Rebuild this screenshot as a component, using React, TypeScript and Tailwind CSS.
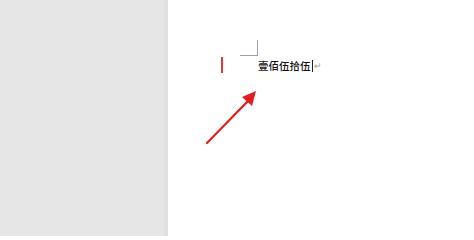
export default function App() {
  return (
    <div className="relative flex h-[236px] w-[474px] overflow-hidden bg-white font-['Noto_Sans_CJK_SC',sans-serif]">
      {/* left page margin */}
      <div className="h-full w-[164px] bg-[#e6e6e6]" />
      <div className="h-full w-[4px] bg-[#e0e0e0]" />

      {/* document area */}
      <div className="flex flex-1 items-start pl-[53px] pt-[40px]">
        <div className="mt-[17px] h-[16px] w-[2px] bg-[#e53935]" />
        <div className="ml-[17px] h-[16px] w-[18px] border-b border-r border-[#a0a0a0]" />
        <div className="mt-[19px] flex items-center text-[10.5px] font-medium leading-[13px] text-[#111]">
          <span>壹佰伍拾伍</span>
          <span className="ml-[1px] h-[12px] w-px bg-[#222]" />
          <span className="ml-[1px] text-[9px] text-[#999]">↵</span>
        </div>
      </div>

      {/* red arrow */}
      <svg className="absolute left-0 top-0" width="474" height="236">
        <line x1="207" y1="143" x2="248" y2="101" stroke="#e41e1e" strokeWidth="2.2" strokeLinecap="round" />
        <polygon points="256,91 252,106 242,97" fill="#e41e1e" />
      </svg>
    </div>
  );
}
